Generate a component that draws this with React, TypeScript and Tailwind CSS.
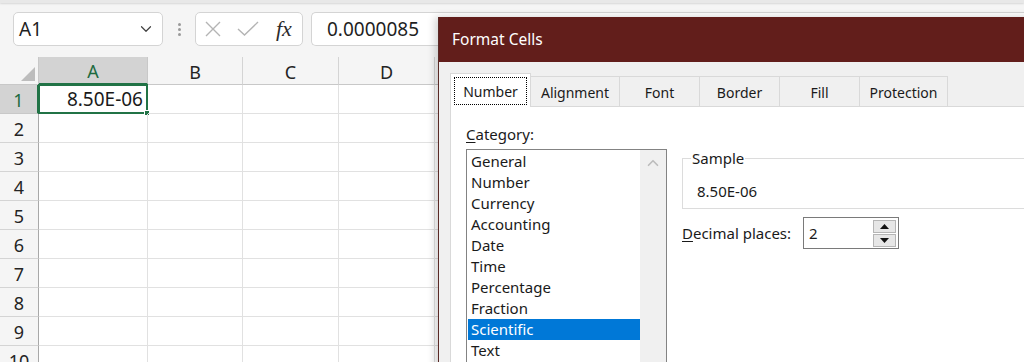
import { ChevronDown, ChevronUp } from "lucide-react";

const cols = [
  { label: "A", selected: true },
  { label: "B" },
  { label: "C" },
  { label: "D" },
  { label: "" },
];

const rows = [1, 2, 3, 4, 5, 6, 7, 8, 9, 10];

const categories = [
  "General",
  "Number",
  "Currency",
  "Accounting",
  "Date",
  "Time",
  "Percentage",
  "Fraction",
  "Scientific",
  "Text",
];

const tabs = [
  { label: "Alignment", w: "w-[89px]" },
  { label: "Font", w: "w-[80px]" },
  { label: "Border", w: "w-[80px]" },
  { label: "Fill", w: "w-[80px]" },
  { label: "Protection", w: "w-[88px]" },
];

function FormulaBar() {
  return (
    <div className="flex h-[34px] items-center pl-[13px]">
      {/* Name box */}
      <div className="flex h-[34px] w-[150px] items-center justify-between rounded-[5px] border border-[#d4d4d4] bg-white pl-[5px] pr-[7px]">
        <span className="text-[19px] text-[#1f1f1f]">A1</span>
        <ChevronDown className="h-[18px] w-[18px] text-[#424242]" strokeWidth={1.6} />
      </div>
      {/* grip */}
      <div className="flex w-[32px] flex-col items-center gap-[2px]">
        <span className="h-[3px] w-[3px] rounded-full bg-[#9a9a9a]" />
        <span className="h-[3px] w-[3px] rounded-full bg-[#9a9a9a]" />
        <span className="h-[3px] w-[3px] rounded-full bg-[#9a9a9a]" />
      </div>
      {/* cancel / enter / fx */}
      <div className="flex h-[34px] w-[108px] items-center rounded-[5px] border border-[#d4d4d4] bg-white pl-[8px]">
        <svg width="18" height="18" viewBox="0 0 18 18" className="shrink-0">
          <path d="M2 2 L16 16 M16 2 L2 16" stroke="#b4b4b4" strokeWidth="1.4" fill="none" />
        </svg>
        <svg width="22" height="16" viewBox="0 0 22 16" className="ml-[15px] shrink-0">
          <path d="M1 8 L7.5 14 L21 1" stroke="#b4b4b4" strokeWidth="1.4" fill="none" />
        </svg>
        <span className="ml-[17px] font-['Liberation_Serif',serif] text-[22px] italic leading-none text-[#2b2b2b]">
          fx
        </span>
      </div>
      {/* input */}
      <div className="ml-[8px] flex h-[34px] flex-1 items-center rounded-l-[5px] border border-r-0 border-[#d4d4d4] bg-white pl-[15px]">
        <span className="text-[19px] text-[#1f1f1f]">0.0000085</span>
      </div>
    </div>
  );
}

function Sheet() {
  return (
    <div className="grid grid-cols-[39px_109px_95px_96px_96px_1fr] bg-white">
      {/* corner */}
      <div className="relative h-[28px] border-b border-r border-[#c8c8c8] bg-[#f5f5f5]">
        <svg width="14" height="14" viewBox="0 0 14 14" className="absolute bottom-[3px] right-[3px]">
          <path d="M14 0 L14 14 L0 14 Z" fill="#bdbdbd" />
        </svg>
      </div>
      {cols.map((c, i) => (
        <div
          key={i}
          className={
            c.selected
              ? "flex h-[28px] items-center justify-center border-b-2 border-r border-b-[#217346] border-r-[#c8c8c8] bg-[#d3d3d3] pt-[3px] text-[18px] text-[#1e6b40]"
              : "flex h-[28px] items-center justify-center border-b border-r border-[#d4d4d4] border-b-[#c8c8c8] bg-[#f5f5f5] pt-[3px] text-[18px] text-[#242424]"
          }
        >
          {c.label}
        </div>
      ))}
      {rows.map((r) => (
        <div key={r} className="contents">
          <div
            className={
              r === 1
                ? "flex h-[29px] items-center justify-center border-b border-r-2 border-b-[#c8c8c8] border-r-[#217346] bg-[#d3d3d3] pt-[3px] text-[18px] text-[#1e6b40]"
                : "flex h-[29px] items-center justify-center border-b border-r border-b-[#d4d4d4] border-r-[#a8a8a8] bg-[#f5f5f5] pt-[3px] text-[18px] text-[#242424]"
            }
          >
            {r}
          </div>
          {cols.map((c, i) => (
            <div key={i} className="relative h-[29px] border-b border-r border-[#e1e1e1]">
              {r === 1 && i === 0 && (
                <>
                  <div className="absolute -left-[1px] -top-[1px] bottom-[-1px] right-[-1px] flex items-center justify-end border-2 border-[#217346] pr-[3px] pt-[1px] text-[19px] text-[#1a1a1a]">
                    8.50E-06
                  </div>
                  <div className="absolute -bottom-[3px] -right-[3px] h-[6px] w-[6px] border border-white bg-[#217346]" />
                </>
              )}
            </div>
          ))}
        </div>
      ))}
    </div>
  );
}

function FormatCellsDialog() {
  return (
    <div className="absolute left-[438px] top-[17px] h-[360px] w-[600px] border-l border-[#5a2a26] bg-[#f0f0f0] shadow-[-3px_0_8px_rgba(0,0,0,0.18)]">
      <div className="flex h-[45px] items-center bg-[#621e1b] pl-[13px] text-[15.5px] text-white">
        Format Cells
      </div>
      <div className="pl-[11px] pt-[11px]">
        {/* tabs */}
        <div className="flex h-[33px] items-end">
          <div className="relative z-10 -mb-px flex h-[34px] w-[81px] items-stretch border border-b-0 border-[#d9d9d9] bg-white p-[3px] pb-[2px]">
            <div className="flex flex-1 items-center justify-center border border-dotted border-black pt-[1px] text-[14px] text-[#1a1a1a]">
              Number
            </div>
          </div>
          {tabs.map((t) => (
            <div
              key={t.label}
              className={`flex h-[30px] ${t.w} items-center justify-center border-r border-t border-[#d9d9d9] pt-[2px] text-[14px] text-[#1a1a1a]`}
            >
              {t.label}
            </div>
          ))}
        </div>
        {/* panel */}
        <div className="flex h-[300px] border-l border-t border-[#d9d9d9] bg-white pl-[15px] pt-[17px]">
          <div className="w-[201px]">
            <div className="text-[15px] leading-[20px] text-[#1a1a1a]">
              <span className="underline underline-offset-2">C</span>ategory:
            </div>
            <div className="mt-[5px] flex h-[240px] border border-[#838383] bg-white">
              <div className="flex-1 pl-[1px] pt-[1px]">
                {categories.map((c) => (
                  <div
                    key={c}
                    className={
                      c === "Scientific"
                        ? "h-[21px] bg-[#0078d7] pl-[3px] text-[15px] leading-[21px] text-white"
                        : "h-[21px] pl-[3px] text-[15px] leading-[21px] text-[#1a1a1a]"
                    }
                  >
                    {c}
                  </div>
                ))}
              </div>
              <div className="flex w-[26px] justify-center bg-[#f0f0f0] pt-[4px]">
                <ChevronUp className="h-[18px] w-[18px] text-[#bcbcbc]" strokeWidth={2.2} />
              </div>
            </div>
          </div>
          <div className="ml-[15px] flex-1">
            <fieldset className="mt-[25px] h-[60px] border border-[#dcdcdc] pl-[14px]">
              <legend className="-ml-[6px] px-[1px] text-[15px] leading-[18px] text-[#1a1a1a]">Sample</legend>
              <div className="pt-[14px] text-[15px] leading-[20px] text-[#1a1a1a]">8.50E-06</div>
            </fieldset>
            <div className="mt-[8px] flex items-center">
              <span className="w-[121px] text-[15px] text-[#1a1a1a]">
                <span className="underline underline-offset-2">D</span>ecimal places:
              </span>
              <div className="flex h-[32px] w-[96px] items-center justify-between border border-[#7a7a7a] bg-white pl-[5px] pr-[2px]">
                <span className="text-[15px] text-[#1a1a1a]">2</span>
                <div className="flex flex-col gap-[1px]">
                  <div className="flex h-[13px] w-[23px] items-center justify-center border border-[#b5b5b5] bg-[#e6e6e6]">
                    <svg width="9" height="5" viewBox="0 0 9 5">
                      <path d="M0 5 L4.5 0 L9 5 Z" fill="#111" />
                    </svg>
                  </div>
                  <div className="flex h-[13px] w-[23px] items-center justify-center border border-[#b5b5b5] bg-[#e6e6e6]">
                    <svg width="9" height="5" viewBox="0 0 9 5">
                      <path d="M0 0 L9 0 L4.5 5 Z" fill="#111" />
                    </svg>
                  </div>
                </div>
              </div>
            </div>
          </div>
        </div>
      </div>
    </div>
  );
}

export default function App() {
  return (
    <div className="relative h-[362px] w-[1024px] overflow-hidden bg-[#f5f5f5] font-['Noto_Sans',sans-serif]">
      <div className="h-[3px] bg-[#e8e8e8] shadow-[0_1px_2px_rgba(0,0,0,0.12)]" />
      <div className="pt-[9px]">
        <FormulaBar />
      </div>
      <div className="mt-[11px]">
        <Sheet />
      </div>
      <FormatCellsDialog />
    </div>
  );
}
